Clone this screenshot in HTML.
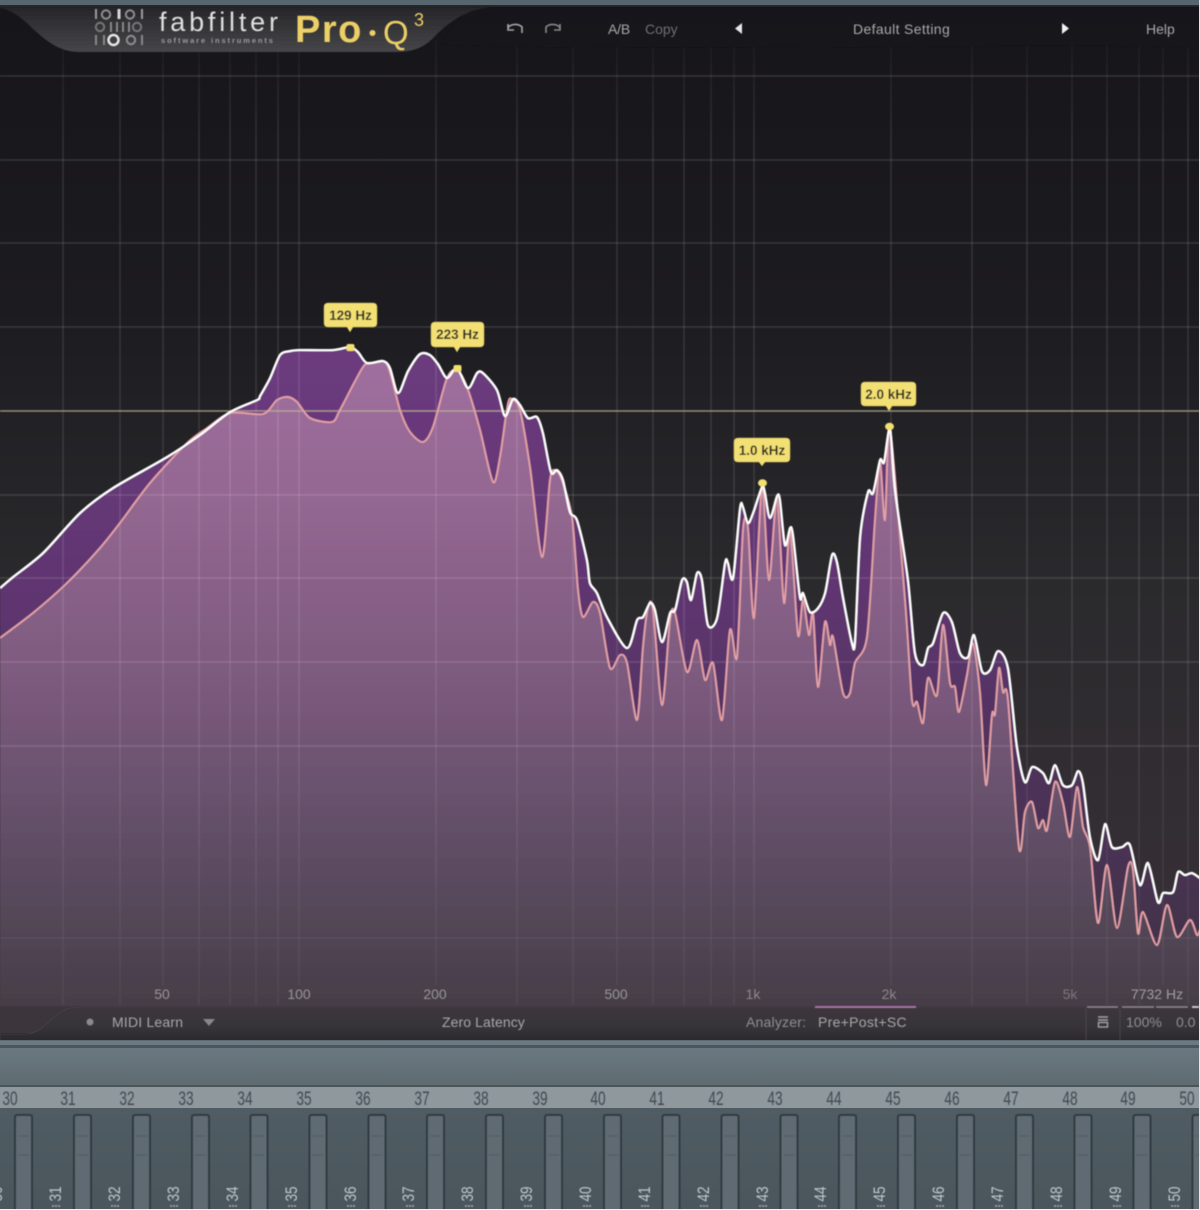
<!DOCTYPE html>
<html lang="en">
<head>
<meta charset="utf-8">
<title>FabFilter Pro-Q 3</title>
<style>
html,body{margin:0;padding:0;background:#1b1a1e;width:1200px;height:1210px;overflow:hidden}
svg{display:block}
text{font-family:"Liberation Sans",sans-serif}
</style>
</head>
<body>
<svg width="1200" height="1210" viewBox="0 0 1200 1210" xmlns="http://www.w3.org/2000/svg">
<defs>
<linearGradient id="bg" x1="0" y1="0" x2="0" y2="1010" gradientUnits="userSpaceOnUse">
<stop offset="0" stop-color="#161519"/><stop offset=".3" stop-color="#1c1b1f"/><stop offset=".6" stop-color="#2b2a2d"/><stop offset=".85" stop-color="#342e34"/><stop offset="1" stop-color="#3c353b"/>
</linearGradient>
<linearGradient id="lf" x1="0" y1="360" x2="0" y2="1005" gradientUnits="userSpaceOnUse">
<stop offset="0" stop-color="#a06f9f"/><stop offset=".25" stop-color="#91668f"/><stop offset=".5" stop-color="#7c5a7e"/><stop offset=".75" stop-color="#604e65"/><stop offset="1" stop-color="#463e48"/>
</linearGradient>
<linearGradient id="df" x1="0" y1="345" x2="0" y2="1000" gradientUnits="userSpaceOnUse">
<stop offset="0" stop-color="#6d3b7f"/><stop offset=".4" stop-color="#5f3570"/><stop offset=".7" stop-color="#4b3257"/><stop offset="1" stop-color="#3f3145"/>
</linearGradient>
<linearGradient id="hd" x1="0" y1="4" x2="0" y2="54" gradientUnits="userSpaceOnUse">
<stop offset="0" stop-color="#242427"/><stop offset="1" stop-color="#48484b"/>
</linearGradient>
<linearGradient id="bar" x1="0" y1="1006" x2="0" y2="1041" gradientUnits="userSpaceOnUse">
<stop offset="0" stop-color="#3e373c"/><stop offset=".6" stop-color="#37333a"/><stop offset="1" stop-color="#2a292d"/>
</linearGradient>
<linearGradient id="pan" x1="0" y1="1048" x2="0" y2="1086" gradientUnits="userSpaceOnUse">
<stop offset="0" stop-color="#697880"/><stop offset="1" stop-color="#5f6b71"/>
</linearGradient>
<linearGradient id="str" x1="0" y1="1108" x2="0" y2="1210" gradientUnits="userSpaceOnUse">
<stop offset="0" stop-color="#505c63"/><stop offset="1" stop-color="#4a555c"/>
</linearGradient>
<linearGradient id="gv" x1="0" y1="40" x2="0" y2="1005" gradientUnits="userSpaceOnUse">
<stop offset="0" stop-color="#fff" stop-opacity=".03"/><stop offset=".1" stop-color="#fff" stop-opacity=".11"/><stop offset=".6" stop-color="#fff" stop-opacity=".11"/><stop offset="1" stop-color="#fff" stop-opacity=".04"/>
</linearGradient>
<filter id="b" x="-2%" y="-2%" width="104%" height="104%"><feGaussianBlur stdDeviation=".6"/></filter>
<filter id="t" x="-5%" y="-20%" width="110%" height="140%"><feGaussianBlur stdDeviation=".55"/></filter>
<g id="fd">
<rect x="15" y="1115" width="17" height="100" rx="2" fill="#5e6b72" stroke="#2f3a40" stroke-width="2"/>
<path d="M18 1136H29M18 1155H29" stroke="#4f5b62" stroke-width="1"/>
</g>
</defs>

<rect width="1200" height="1210" fill="url(#bg)"/>

<g filter="url(#b)">
<!-- Dark fill under white curve -->
<path class="sm" fill="url(#df)" d="M0 588L13 577 43 553 80 513 113 488 167 457 200 435 230 412 257 400 260 396 270 378 280 355 290 351 300 350 333 350 350 347 358 352 367 363 383 361 390 368 398 393 408 371 420 354 430 355 438 364 447 378 457 368 468 388 477 373 483 373 497 390 505 416 513 399 520 405 528 418 537 417 543 433 551 472 557 470 563 480 570 512 577 520 587 560 590 583 597 593 607 617 627 648 637 620 643 617 650 603 655 610 662 642 670 613 675 610 682 580 687 582 691 600 697 573 702 580 708 625 717 618 725 563 728 563 733 578 740 508 743 507 748 523 753 513 762 487 765 493 770 518 777 496 780 500 785 545 790 528 793 535 800 597 803 593 810 612 818 608 825 593 832 555 837 562 843 597 852 643 855 640 860 537 868 492 873 493 880 460 884 462 890 428 895 490 908 580 915 653 923 665 928 648 933 643 943 613 952 622 960 653 968 657 974 635 982 671 990 670 998 651 1008 668 1017 747 1025 782 1032 767 1043 773 1049 783 1055 765 1063 785 1072 785 1078 771 1083 783 1090 837 1098 860 1105 824 1112 847 1122 847 1130 845 1140 885 1148 863 1158 902 1163 893 1173 892 1178 872 1185 875 1192 873 1200 878V1006H0Z"/>
<!-- Light fill under pink curve -->
<path class="sm" fill="url(#lf)" d="M0 638L33 613 67 583 100 548 120 523 150 483 187 443 207 428 230 413 263 414 277 400 288 397 297 402 310 418 332 422 340 410 363 367 373 363 387 364 400 410 410 432 423 442 433 427 447 378 457 370 467 387 480 430 493 482 500 457 508 403 513 400 520 410 530 467 542 557 550 480 555 470 562 480 572 517 578 590 583 617 593 602 600 613 610 668 620 655 627 663 637 720 643 647 648 607 653 610 662 705 670 620 675 613 687 672 697 640 705 680 713 663 722 720 730 630 737 657 743 530 748 528 754 618 762 487 769 580 777 497 784 603 790 530 798 635 803 600 809 635 813 613 818 687 825 622 830 645 833 637 843 693 850 693 855 663 867 637 875 520 880 463 885 520 890 428 905 600 912 700 917 702 923 723 928 678 937 695 943 625 950 683 955 687 959 712 967 675 973 643 980 693 986 785 992 715 995 714 999 668 1003 692 1008 700 1019 848 1025 812 1032 802 1038 828 1043 820 1047 830 1055 782 1063 803 1070 837 1077 787 1083 827 1090 847 1098 923 1107 865 1117 928 1128 867 1133 870 1138 933 1143 912 1157 945 1167 905 1177 937 1190 920 1197 935 1200 930V1006H0Z"/>

<!-- Grid -->
<g fill="none">
<path stroke="url(#gv)" stroke-width="1.5" d="M63 40V1005M120 40V1005M163 40V985M199 40V1005M230 40V1005M256 40V1005M278 40V1005M299 40V985M436 40V985M517 40V1005M573 40V1005M617 40V985M653 40V1005M684 40V1005M711 40V1005M734 40V1005M754 40V985M891 40V985M972 40V1005M1027 40V1005M1072 40V985M1107 40V1005M1139 40V1005M1163 40V985M1188 40V1005"/>
<path stroke="#fff" stroke-opacity=".13" stroke-width="1.5" d="M0 76H1200M0 160H1200M0 243H1200M0 327H1200M0 495H1200M0 578H1200M0 662H1200M0 746H1200"/>
<path stroke="#fff" stroke-opacity=".06" stroke-width="1.5" d="M0 938H1200"/>
</g>
<path d="M0 411H1200" stroke="#bdb195" stroke-opacity=".75" stroke-width="1.6"/>

<!-- Curves -->
<path class="sm" fill="none" stroke="#e3a0a6" stroke-width="1.9" stroke-linejoin="round" d="M0 638L33 613 67 583 100 548 120 523 150 483 187 443 207 428 230 413 263 414 277 400 288 397 297 402 310 418 332 422 340 410 363 367 373 363 387 364 400 410 410 432 423 442 433 427 447 378 457 370 467 387 480 430 493 482 500 457 508 403 513 400 520 410 530 467 542 557 550 480 555 470 562 480 572 517 578 590 583 617 593 602 600 613 610 668 620 655 627 663 637 720 643 647 648 607 653 610 662 705 670 620 675 613 687 672 697 640 705 680 713 663 722 720 730 630 737 657 743 530 748 528 754 618 762 487 769 580 777 497 784 603 790 530 798 635 803 600 809 635 813 613 818 687 825 622 830 645 833 637 843 693 850 693 855 663 867 637 875 520 880 463 885 520 890 428 905 600 912 700 917 702 923 723 928 678 937 695 943 625 950 683 955 687 959 712 967 675 973 643 980 693 986 785 992 715 995 714 999 668 1003 692 1008 700 1019 848 1025 812 1032 802 1038 828 1043 820 1047 830 1055 782 1063 803 1070 837 1077 787 1083 827 1090 847 1098 923 1107 865 1117 928 1128 867 1133 870 1138 933 1143 912 1157 945 1167 905 1177 937 1190 920 1197 935 1200 930"/>
<path class="sm" fill="none" stroke="#ffffff" stroke-width="2.3" stroke-linejoin="round" d="M0 588L13 577 43 553 80 513 113 488 167 457 200 435 230 412 257 400 260 396 270 378 280 355 290 351 300 350 333 350 350 347 358 352 367 363 383 361 390 368 398 393 408 371 420 354 430 355 438 364 447 378 457 368 468 388 477 373 483 373 497 390 505 416 513 399 520 405 528 418 537 417 543 433 551 472 557 470 563 480 570 512 577 520 587 560 590 583 597 593 607 617 627 648 637 620 643 617 650 603 655 610 662 642 670 613 675 610 682 580 687 582 691 600 697 573 702 580 708 625 717 618 725 563 728 563 733 578 740 508 743 507 748 523 753 513 762 487 765 493 770 518 777 496 780 500 785 545 790 528 793 535 800 597 803 593 810 612 818 608 825 593 832 555 837 562 843 597 852 643 855 640 860 537 868 492 873 493 880 460 884 462 890 428 895 490 908 580 915 653 923 665 928 648 933 643 943 613 952 622 960 653 968 657 974 635 982 671 990 670 998 651 1008 668 1017 747 1025 782 1032 767 1043 773 1049 783 1055 765 1063 785 1072 785 1078 771 1083 783 1090 837 1098 860 1105 824 1112 847 1122 847 1130 845 1140 885 1148 863 1158 902 1163 893 1173 892 1178 872 1185 875 1192 873 1200 878"/>

<!-- Peak markers -->
<g fill="#f2df6e">
<rect x="346.500" y="344" width="8" height="7" rx="2"/>
<rect x="453.500" y="365" width="8" height="7" rx="2"/>
<ellipse cx="762.500" cy="483" rx="4.500" ry="3.800"/>
<ellipse cx="889.500" cy="426.500" rx="4.500" ry="3.800"/>
</g>
</g>

<!-- Tooltips -->
<g filter="url(#t)">
<g fill="#f3e074" stroke="#c9b653" stroke-width=".5">
<path d="M328 303H373Q377 303 377 307V323Q377 327 373 327H353L350 332 347 327H328Q324 327 324 323V307Q324 303 328 303Z"/>
<path d="M435 322H480Q484 322 484 326V343Q484 347 480 347H460L457 352 454 347H435Q431 347 431 343V326Q431 322 435 322Z"/>
<path d="M738 438H786Q790 438 790 442V458Q790 462 786 462H765L762 466 759 462H738Q734 462 734 458V442Q734 438 738 438Z"/>
<path d="M865 382H912Q916 382 916 386V402Q916 406 912 406H892L889 411 886 406H865Q861 406 861 402V386Q861 382 865 382Z"/>
</g>
<g fill="#2a2a22" font-size="13.500" font-weight="700" text-anchor="middle">
<text x="350.500" y="320">129 Hz</text>
<text x="457.500" y="339">223 Hz</text>
<text x="762" y="455">1.0 kHz</text>
<text x="888.500" y="399">2.0 kHz</text>
</g>
</g>

<!-- Header -->
<rect x="0" y="0" width="1200" height="5" fill="#57666e"/>
<rect x="0" y="5" width="1200" height="2" fill="#26282b"/>
<path d="M470 7H1200V48C1100 42 620 52 440 44Z" fill="#19181c" opacity=".9" filter="url(#t)"/>
<path d="M0 7H492C468 9 452 20 438 33 427 45 418 52 395 52H80C58 52 46 40 33 29 21 17 12 10 0 8Z" fill="url(#hd)" filter="url(#t)"/>

<!-- Logo mark -->
<g filter="url(#t)" fill="none" stroke="#8e8e90" stroke-width="2">
<path d="M96 9V19M119 9V19M142 9V19" stroke="#9c9c9e"/>
<path d="M119 9V19" stroke="#d8d8d8" stroke-width="3"/>
<circle cx="106" cy="14.500" r="4.200"/><circle cx="130" cy="14.500" r="4.200"/>
<circle cx="100" cy="27" r="4.200" stroke="#77777a"/><circle cx="137" cy="27" r="4.200" stroke="#77777a"/>
<path d="M111 22V32M117 22V32M123 22V32M129 22V32" stroke="#88888a"/>
<path d="M96 35V45M104 35V45M142 35V45" stroke="#88888a"/>
<circle cx="113.500" cy="40" r="5" stroke="#e6e6e6" stroke-width="2.500"/>
<circle cx="131" cy="40" r="4.200"/>
</g>
<g filter="url(#t)">
<text x="159" y="31" font-size="27" fill="#dfdfdf" letter-spacing="3.800">fabfilter</text>
<text x="161" y="43" font-size="7.500" font-weight="700" fill="#9b9b9d" letter-spacing="1.900">software instruments</text>
<text x="295" y="42" font-size="38" font-weight="700" fill="#eccf66" letter-spacing="1.500">Pro</text>
<circle cx="372.500" cy="33" r="3" fill="#eccf66"/>
<text x="383" y="44" font-size="33" fill="#eccf66">Q</text>
<text x="414" y="26" font-size="18" fill="#eccf66">3</text>

<!-- Header icons -->
<path d="M508 28C510 24 518 23 522 27V33M508 24V30H514" fill="none" stroke="#a8a8aa" stroke-width="1.600"/>
<path d="M560 28C558 24 550 23 546 27V33M560 24V30H554" fill="none" stroke="#8a8a8c" stroke-width="1.600"/>
<g font-size="14" fill="#a9a9ab">
<text x="608" y="34" letter-spacing="-.2">A/B</text>
<text x="645" y="34" fill="#6f6f72">Copy</text>
<text x="853" y="34" letter-spacing=".35">Default Setting</text>
<text x="1146" y="34">Help</text>
</g>
<path d="M742 23V34L735 28.500Z" fill="#e8e8e8"/>
<path d="M1062 23V34L1069 28.500Z" fill="#f2f2f2"/>

<!-- Frequency labels -->
<g font-size="14" fill="#99949a" text-anchor="middle">
<text x="162" y="999">50</text>
<text x="299" y="999">100</text>
<text x="435" y="999">200</text>
<text x="616" y="999">500</text>
<text x="753" y="999" fill="#8c878d">1k</text>
<text x="889" y="999" fill="#8c878d">2k</text>
<text x="1070" y="999" fill="#7a767c">5k</text>
<text x="1157" y="999" fill="#a09ba1">7732 Hz</text>
</g>
</g>

<!-- Bottom bar -->
<rect x="0" y="1033" width="1200" height="8" fill="#29282c"/>
<path d="M0 1034H25C48 1034 52 1007 78 1007H1200V1041H0Z" fill="url(#bar)" stroke="#4a454a" stroke-width=".6"/>
<g filter="url(#t)">
<path d="M815 1007H916" stroke="#a873a8" stroke-width="2"/>
<path d="M1087 1007H1118M1122 1007H1154M1156 1007H1188" stroke="#8e8a90" stroke-width="1.500"/>
<path d="M1192 1007H1199" stroke="#c8c6c8" stroke-width="2"/>
<path d="M1086 1008V1040M1120 1008V1040" stroke="#4a464b" stroke-width="1"/>
<circle cx="90" cy="1022" r="3.500" fill="#8a898b"/>
<path d="M203 1019H215L209 1026Z" fill="#88878a"/>
<g font-size="14" fill="#a7a6a9">
<text x="112" y="1027" letter-spacing=".2">MIDI Learn</text>
<text x="442" y="1027" letter-spacing=".1">Zero Latency</text>
<text x="746" y="1027" fill="#8f8e91" letter-spacing=".2">Analyzer:</text>
<text x="818" y="1027" letter-spacing=".3">Pre+Post+SC</text>
<text x="1126" y="1027" fill="#8f8e91">100%</text>
<text x="1176" y="1027" fill="#8f8e91">0.0</text>
</g>
<path d="M1098 1017H1108M1098 1020H1108" stroke="#a3a2a5" stroke-width="1.400"/>
<rect x="1098.500" y="1022.500" width="9" height="4.500" fill="none" stroke="#a3a2a5" stroke-width="1.400"/>
</g>

<!-- Lower panel -->
<rect x="0" y="1040" width="1200" height="170" fill="#5e6a70"/>
<rect x="0" y="1041" width="1200" height="4" fill="#6a7a82"/>
<rect x="0" y="1045" width="1200" height="3" fill="#4b565c"/>
<rect x="0" y="1048" width="1200" height="38" fill="url(#pan)"/>
<rect x="0" y="1085" width="1200" height="2" fill="#4a555a"/>
<rect x="0" y="1087" width="1200" height="21" fill="#8e989d"/>
<rect x="0" y="1108" width="1200" height="102" fill="url(#str)"/>

<g filter="url(#t)">
<use href="#fd"/><use href="#fd" x="59"/><use href="#fd" x="118"/><use href="#fd" x="177"/><use href="#fd" x="235.500"/><use href="#fd" x="294.500"/><use href="#fd" x="353.500"/><use href="#fd" x="412"/><use href="#fd" x="471"/><use href="#fd" x="530"/><use href="#fd" x="589"/><use href="#fd" x="647.500"/><use href="#fd" x="706.500"/><use href="#fd" x="765.500"/><use href="#fd" x="824"/><use href="#fd" x="883"/><use href="#fd" x="942"/><use href="#fd" x="1001"/><use href="#fd" x="1059.500"/><use href="#fd" x="1118.500"/><use href="#fd" x="1177.500"/>
<g font-size="19" fill="#404a50" text-anchor="middle">
<text transform="translate(10 1105) scale(.72 1)">30</text>
<text transform="translate(68 1105) scale(.72 1)">31</text>
<text transform="translate(127 1105) scale(.72 1)">32</text>
<text transform="translate(186 1105) scale(.72 1)">33</text>
<text transform="translate(245 1105) scale(.72 1)">34</text>
<text transform="translate(304 1105) scale(.72 1)">35</text>
<text transform="translate(363 1105) scale(.72 1)">36</text>
<text transform="translate(422 1105) scale(.72 1)">37</text>
<text transform="translate(481 1105) scale(.72 1)">38</text>
<text transform="translate(540 1105) scale(.72 1)">39</text>
<text transform="translate(598 1105) scale(.72 1)">40</text>
<text transform="translate(657 1105) scale(.72 1)">41</text>
<text transform="translate(716 1105) scale(.72 1)">42</text>
<text transform="translate(775 1105) scale(.72 1)">43</text>
<text transform="translate(834 1105) scale(.72 1)">44</text>
<text transform="translate(893 1105) scale(.72 1)">45</text>
<text transform="translate(952 1105) scale(.72 1)">46</text>
<text transform="translate(1011 1105) scale(.72 1)">47</text>
<text transform="translate(1070 1105) scale(.72 1)">48</text>
<text transform="translate(1128 1105) scale(.72 1)">49</text>
<text transform="translate(1187 1105) scale(.72 1)">50</text>
</g>
<g font-size="17" fill="#bfc7cb" text-anchor="middle">
<text transform="translate(2 1194) rotate(-90) scale(.8 1)">30</text>
<text transform="translate(61 1194) rotate(-90) scale(.8 1)">31</text>
<text transform="translate(120 1194) rotate(-90) scale(.8 1)">32</text>
<text transform="translate(179 1194) rotate(-90) scale(.8 1)">33</text>
<text transform="translate(238 1194) rotate(-90) scale(.8 1)">34</text>
<text transform="translate(297 1194) rotate(-90) scale(.8 1)">35</text>
<text transform="translate(356 1194) rotate(-90) scale(.8 1)">36</text>
<text transform="translate(414 1194) rotate(-90) scale(.8 1)">37</text>
<text transform="translate(473 1194) rotate(-90) scale(.8 1)">38</text>
<text transform="translate(532 1194) rotate(-90) scale(.8 1)">39</text>
<text transform="translate(591 1194) rotate(-90) scale(.8 1)">40</text>
<text transform="translate(650 1194) rotate(-90) scale(.8 1)">41</text>
<text transform="translate(709 1194) rotate(-90) scale(.8 1)">42</text>
<text transform="translate(768 1194) rotate(-90) scale(.8 1)">43</text>
<text transform="translate(826 1194) rotate(-90) scale(.8 1)">44</text>
<text transform="translate(885 1194) rotate(-90) scale(.8 1)">45</text>
<text transform="translate(944 1194) rotate(-90) scale(.8 1)">46</text>
<text transform="translate(1003 1194) rotate(-90) scale(.8 1)">47</text>
<text transform="translate(1062 1194) rotate(-90) scale(.8 1)">48</text>
<text transform="translate(1121 1194) rotate(-90) scale(.8 1)">49</text>
<text transform="translate(1180 1194) rotate(-90) scale(.8 1)">50</text>
</g>
<path d="M52 1206H60M111 1206H119M170 1206H178M229 1206H237M288 1206H296M347 1206H355M406 1206H414M465 1206H473M524 1206H532M583 1206H591M641 1206H649M700 1206H708M759 1206H767M818 1206H826M877 1206H885M936 1206H944M995 1206H1003M1054 1206H1062M1113 1206H1121M1171 1206H1179" stroke="#a5aeb3" stroke-width="1.500" stroke-dasharray="2 1"/>
</g>

<rect x="0" y="1209" width="1200" height="1" fill="#f4f4f4"/>
<rect x="1199" y="0" width="1" height="1210" fill="#e8e8e8"/>
</svg>
<script>
document.querySelectorAll('path.sm').forEach(function(p){
  var d=p.getAttribute('d'),m=d.match(/^M([\d.]+) ([\d.]+)L([\d. ]+)(V.*)?$/);
  if(!m)return;
  var n=(m[1]+' '+m[2]+' '+m[3]).trim().split(/\s+/).map(Number),a=[],i;
  for(i=0;i<n.length;i+=2)a.push([n[i],n[i+1]]);
  var o='M'+a[0][0]+' '+a[0][1],k=.14;
  for(i=0;i<a.length-1;i++){
    var p0=a[Math.max(i-1,0)],p1=a[i],p2=a[i+1],p3=a[Math.min(i+2,a.length-1)];
    o+='C'+(p1[0]+(p2[0]-p0[0])*k).toFixed(1)+' '+(p1[1]+(p2[1]-p0[1])*k).toFixed(1)+' '+(p2[0]-(p3[0]-p1[0])*k).toFixed(1)+' '+(p2[1]-(p3[1]-p1[1])*k).toFixed(1)+' '+p2[0]+' '+p2[1];
  }
  p.setAttribute('d',o+(m[4]||''));
});
</script>
</body>
</html>
